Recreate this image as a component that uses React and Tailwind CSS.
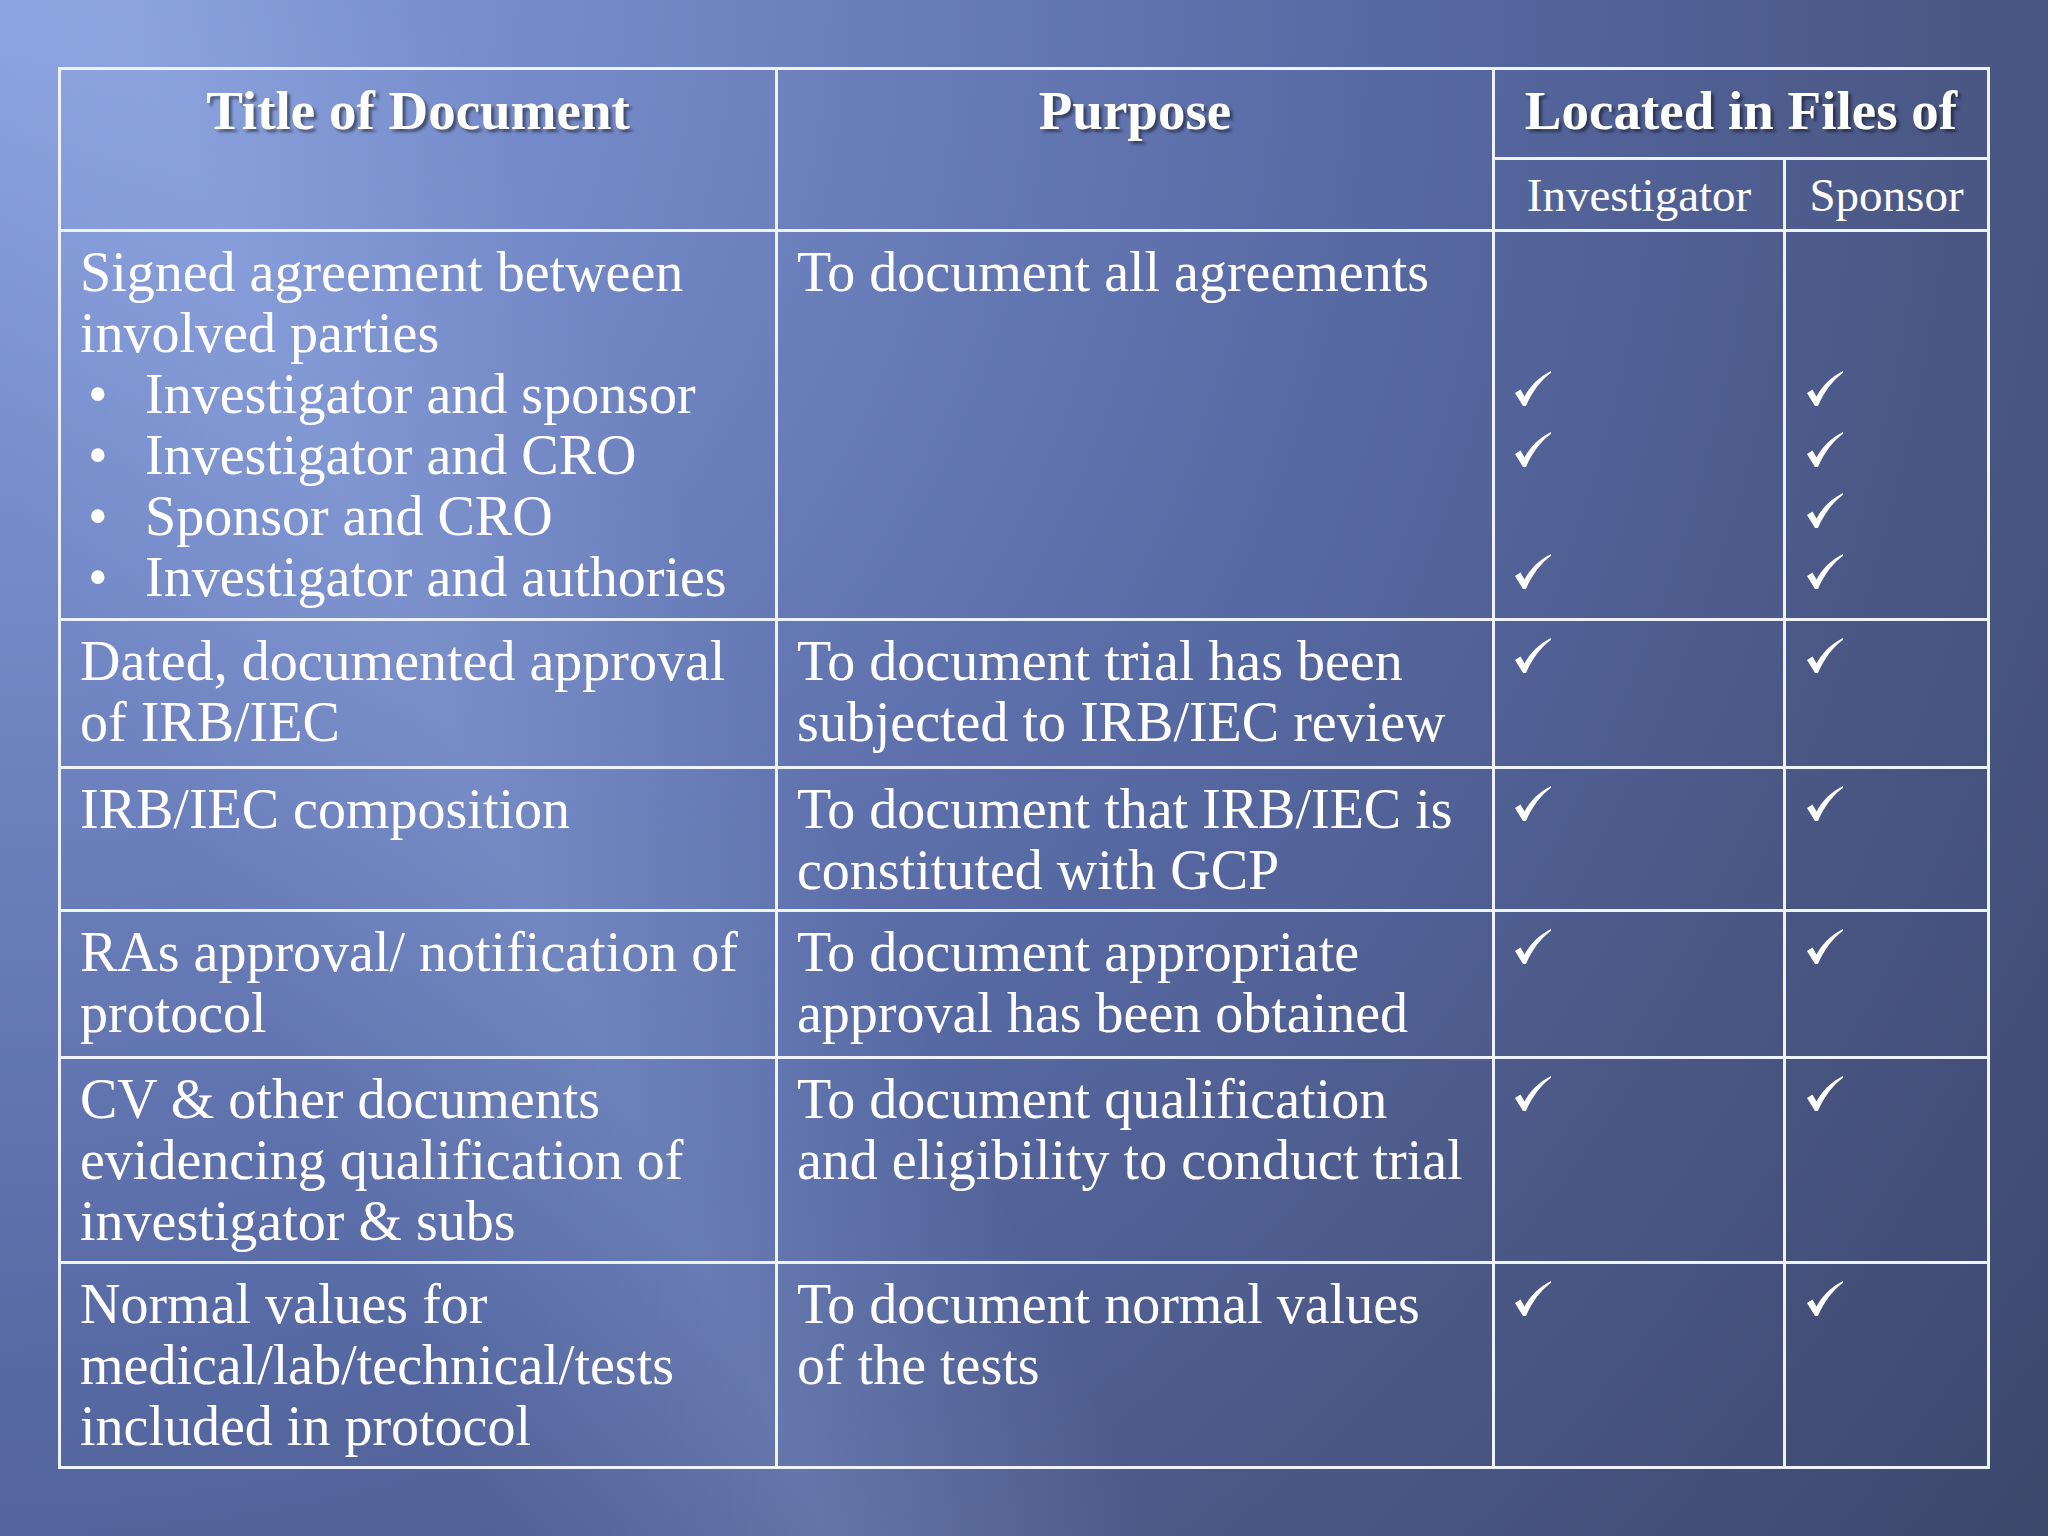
import React from "react";

const Check = () => (
  <svg width="36" height="35" viewBox="0 0 36 35" className="block">
    <path
      d="M0 22 L5.5 18.5 L9.5 25.5 C15 15 24 6 36 0 L36 1.8 C26 9.5 17.5 20 11 35 L8 35 Z"
      fill="#ffffff"
    />
  </svg>
);

const rows = [
  {
    h: "h-[389px]",
    title: ["Signed agreement between", "involved parties"],
    bullets: ["Investigator and sponsor", "Investigator and CRO", "Sponsor and CRO", "Investigator and authories"],
    purpose: ["To document all agreements"],
    lines: 6,
    inv: [2, 3, 5],
    spo: [2, 3, 4, 5],
  },
  {
    h: "h-[148px]",
    title: ["Dated, documented approval", "of IRB/IEC"],
    purpose: ["To document trial has been", "subjected to IRB/IEC review"],
    lines: 1,
    inv: [0],
    spo: [0],
  },
  {
    h: "h-[143px]",
    title: ["IRB/IEC composition"],
    purpose: ["To document that IRB/IEC is", "constituted with GCP"],
    lines: 1,
    inv: [0],
    spo: [0],
  },
  {
    h: "h-[147px]",
    title: ["RAs approval/ notification of", "protocol"],
    purpose: ["To document appropriate", "approval has been obtained"],
    lines: 1,
    inv: [0],
    spo: [0],
  },
  {
    h: "h-[205px]",
    title: ["CV & other documents", "evidencing qualification of", "investigator & subs"],
    purpose: ["To document qualification", "and eligibility to conduct trial"],
    lines: 1,
    inv: [0],
    spo: [0],
  },
  {
    h: "h-[205px]",
    title: ["Normal values for", "medical/lab/technical/tests", "included in protocol"],
    purpose: ["To document normal values", "of the tests"],
    lines: 1,
    inv: [0],
    spo: [0],
  },
];

function Checks({ lines, marks }) {
  return (
    <div className="flex flex-col">
      {Array.from({ length: lines }).map((_, i) => (
        <div key={i} className="h-[61px] pt-[7px]">
          {marks.includes(i) && <Check />}
        </div>
      ))}
    </div>
  );
}

export default function App() {
  const cell = "border-[3px] border-[#eef2fb] align-top";
  const head = "font-bold text-[55px] leading-[61px] [text-shadow:3px_3px_3px_rgba(0,0,0,0.45)]";

  return (
    <div className="relative w-[2048px] h-[1536px] overflow-hidden bg-[radial-gradient(circle_at_0%_0%,#889fdf_0%,#7388c6_24%,#5668a2_55%,#4b5886_76%,#3c476c_100%)] font-['Liberation_Serif',serif] text-white">
      <div className="absolute inset-0 pointer-events-none bg-[linear-gradient(65deg,rgba(170,195,245,0)_18%,rgba(170,195,245,0.22)_30%,rgba(170,195,245,0)_42%)]" />
      <div className="relative pt-[67px] pl-[58px]">
        <table className="table-fixed border-collapse w-[1929px]">
          <colgroup>
            <col className="w-[717px]" />
            <col className="w-[717px]" />
            <col className="w-[291px]" />
            <col className="w-[204px]" />
          </colgroup>
          <thead>
            <tr className="h-[90px]">
              <th rowSpan={2} className={`${cell} pt-[10px] text-center`}>
                <span className={head}>Title of Document</span>
              </th>
              <th rowSpan={2} className={`${cell} pt-[10px] text-center`}>
                <span className={head}>Purpose</span>
              </th>
              <th colSpan={2} className={`${cell} pt-[10px] text-center`}>
                <span className={head}>Located in Files of</span>
              </th>
            </tr>
            <tr className="h-[72px]">
              <th className="border-[3px] border-[#eef2fb] align-middle text-center font-normal text-[47px] leading-[56px]">
                Investigator
              </th>
              <th className="border-[3px] border-[#eef2fb] align-middle text-center font-normal text-[47px] leading-[56px]">
                Sponsor
              </th>
            </tr>
          </thead>
          <tbody>
            {rows.map((r, idx) => (
              <tr key={idx} className={r.h}>
                <td className={`${cell} pt-[10px] pl-[19px] pr-0 text-[56px] leading-[61px] whitespace-nowrap`}>
                  {r.title.map((t) => (
                    <div key={t}>{t}</div>
                  ))}
                  {r.bullets &&
                    r.bullets.map((b) => (
                      <div key={b} className="flex">
                        <span className="w-[65px] pl-[8px]">•</span>
                        <span>{b}</span>
                      </div>
                    ))}
                </td>
                <td className={`${cell} pt-[10px] pl-[19px] pr-0 text-[56px] leading-[61px] whitespace-nowrap`}>
                  {r.purpose.map((t) => (
                    <div key={t}>{t}</div>
                  ))}
                </td>
                <td className={`${cell} pt-[10px] pl-[20px]`}>
                  <Checks lines={r.lines} marks={r.inv} />
                </td>
                <td className={`${cell} pt-[10px] pl-[21px]`}>
                  <Checks lines={r.lines} marks={r.spo} />
                </td>
              </tr>
            ))}
          </tbody>
        </table>
      </div>
    </div>
  );
}
